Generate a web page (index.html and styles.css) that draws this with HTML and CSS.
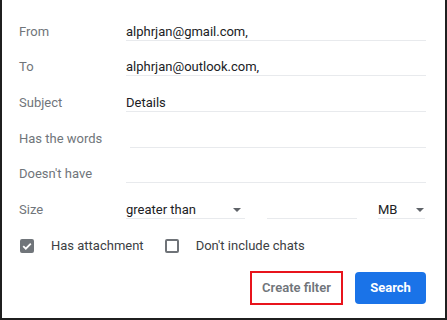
FILE: index.html
```html
<!DOCTYPE html>
<html>
<head>
<meta charset="utf-8">
<link rel="stylesheet" href="styles.css">
</head>
<body>
<div class="frame">
  <div class="form">
    <div class="row">
      <div class="label">From</div>
      <div class="field">alphrjan@gmail.com,</div>
    </div>
    <div class="row">
      <div class="label">To</div>
      <div class="field">alphrjan@outlook.com,</div>
    </div>
    <div class="row">
      <div class="label">Subject</div>
      <div class="field">Details</div>
    </div>
    <div class="row">
      <div class="label">Has the words</div>
      <div class="field field-inset"></div>
    </div>
    <div class="row">
      <div class="label">Doesn't have</div>
      <div class="field"></div>
    </div>
    <div class="row">
      <div class="label">Size</div>
      <div class="size">
        <div class="field select sel-op"><span>greater than</span><span class="arrow"></span></div>
        <div class="field sel-num"></div>
        <div class="field select sel-unit"><span>MB</span><span class="arrow"></span></div>
      </div>
    </div>
    <div class="checks">
      <div class="check">
        <span class="box checked">
          <svg viewBox="0 0 14 14" width="14" height="14"><path d="M3.2 7.2 L5.8 9.7 L10.8 4.6" fill="none" stroke="#fff" stroke-width="1.8"/></svg>
        </span>
        <span class="check-label">Has attachment</span>
      </div>
      <div class="check">
        <span class="box"></span>
        <span class="check-label">Don't include chats</span>
      </div>
    </div>
    <div class="actions">
      <button class="btn btn-create">Create filter</button>
      <button class="btn btn-search">Search</button>
    </div>
  </div>
</div>
</body>
</html>
```

FILE: styles.css
```css
html, body {
  margin: 0;
  padding: 0;
  background: #fff;
}
.frame {
  width: 447px;
  height: 320px;
  box-sizing: border-box;
  border-left: 2px solid #1f1f1f;
  border-right: 2px solid #1f1f1f;
  border-bottom: 2px solid #1f1f1f;
  font-family: Roboto, "Liberation Sans", Arial, sans-serif;
  font-size: 13px;
  overflow: hidden;
}
.form {
  padding: 14px 19px 0 17px;
}
.row {
  display: grid;
  grid-template-columns: 107px 1fr;
  align-items: center;
  height: 35.67px;
}
.label {
  color: #70757a;
  line-height: 16px;
}
.field {
  height: 16px;
  line-height: 16px;
  padding-bottom: 0;
  border-bottom: 1px solid #e8eaed;
  color: #202124;
  margin-top: 1px;
}
.field-inset {
  margin-left: 4px;
}
.size {
  display: flex;
  align-items: center;
}
.select {
  display: flex;
  align-items: center;
  justify-content: space-between;
}
.sel-op {
  width: 119px;
}
.sel-num {
  width: 90px;
  margin-left: 22px;
}
.sel-unit {
  width: 47px;
  margin-left: 21px;
}
.arrow {
  width: 0;
  height: 0;
  border-left: 4px solid transparent;
  border-right: 4px solid transparent;
  border-top: 4px solid #5f6368;
  margin-right: 4px;
}
.sel-unit .arrow {
  margin-right: 1px;
}
.checks {
  display: flex;
  align-items: center;
  height: 35.67px;
  padding-left: 1px;
}
.check {
  display: flex;
  align-items: center;
}
.check + .check {
  margin-left: 21px;
}
.box {
  width: 14px;
  height: 14px;
  box-sizing: border-box;
  border: 2px solid #6f7378;
  border-radius: 2px;
  display: inline-flex;
  align-items: center;
  justify-content: center;
}
.box.checked {
  background: #70757a;
  border-color: #70757a;
}
.box.checked svg {
  display: block;
  margin: -2px;
}
.check-label {
  margin-left: 17px;
  color: #3c4043;
  line-height: 16px;
}
.actions {
  display: flex;
  justify-content: flex-end;
  align-items: center;
  margin-top: 7px;
}
.btn {
  font-family: Roboto, "Liberation Sans", Arial, sans-serif;
  font-size: 13px;
  font-weight: 700;
  border-radius: 4px;
  cursor: pointer;
  line-height: 16px;
}
.btn-create {
  background: #fff;
  color: #70757a;
  border: 2px solid #e8141c;
  border-radius: 0;
  width: 93px;
  height: 34px;
  padding: 0;
  font-weight: 600;
}
.btn-search {
  background: #1a73e8;
  color: #fff;
  border: none;
  width: 71px;
  height: 32px;
  margin-left: 12px;
  padding: 0;
}
```
